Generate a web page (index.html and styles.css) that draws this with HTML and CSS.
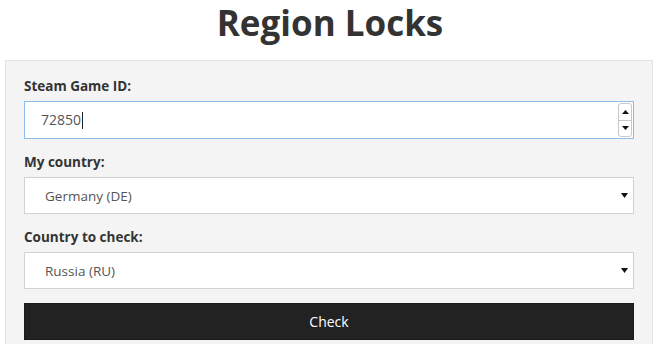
FILE: index.html
```html
<!DOCTYPE html>
<html>
<head>
<meta charset="utf-8">
<title>Region Locks</title>
<link rel="stylesheet" href="styles.css">
</head>
<body>
<h1 class="title">Region Locks</h1>
<form class="panel">
  <div class="group">
    <label class="label">Steam Game ID:</label>
    <div class="field field-focus">
      <span class="value">72850</span><span class="caret"></span>
      <div class="spinner">
        <div class="spin spin-up"><svg width="7" height="4" viewBox="0 0 7 4"><path d="M0 4 L3.5 0 L7 4 Z" fill="#111"/></svg></div>
        <div class="spin spin-down"><svg width="7" height="4" viewBox="0 0 7 4"><path d="M0 0 L3.5 4 L7 0 Z" fill="#111"/></svg></div>
      </div>
    </div>
  </div>
  <div class="group">
    <label class="label">My country:</label>
    <div class="field select">
      <span class="value">Germany (DE)</span>
      <svg class="arrow" width="7" height="5" viewBox="0 0 7 5"><path d="M0 0 L7 0 L3.5 5 Z" fill="#111"/></svg>
    </div>
  </div>
  <div class="group">
    <label class="label">Country to check:</label>
    <div class="field select">
      <span class="value">Russia (RU)</span>
      <svg class="arrow" width="7" height="5" viewBox="0 0 7 5"><path d="M0 0 L7 0 L3.5 5 Z" fill="#111"/></svg>
    </div>
  </div>
  <button type="button" class="btn">Check</button>
</form>
</body>
</html>
```
FILE: styles.css
```css
html, body {
  margin: 0;
  padding: 0;
  background: #fff;
  font-family: "Open Sans", "Liberation Sans", sans-serif;
  color: #333;
}
.title {
  margin: 0 0 15px;
  font-size: 35px;
  line-height: 45px;
  font-weight: 700;
  text-align: center;
  color: #333;
}
.panel {
  margin: 0 7px 0 5px;
  background: #f4f4f4;
  border: 1px solid #e3e3e3;
  padding: 16px 18px 20px;
  display: flex;
  flex-direction: column;
}
.group {
  display: flex;
  flex-direction: column;
  margin-bottom: 14px;
}
.label {
  font-size: 13.5px;
  line-height: 19px;
  font-weight: 700;
  color: #333;
  margin-bottom: 5px;
}
.field {
  position: relative;
  box-sizing: border-box;
  height: 37px;
  background: #fff;
  border: 1px solid #d2d2d2;
  display: flex;
  align-items: center;
  font-size: 13.5px;
  color: #555;
}
.field-focus {
  height: 38px;
  border-color: #8dbdea;
  padding-left: 16px;
  font-size: 14px;
}
.select {
  padding-left: 20px;
}
.value {
  line-height: 20px;
}
.caret {
  width: 1px;
  height: 17px;
  background: #222;
  margin-left: 1px;
}
.spinner {
  position: absolute;
  right: 1px;
  top: 1px;
  bottom: 1px;
  width: 12px;
  border: 1px solid #c8c8c8;
  border-radius: 3px;
  display: flex;
  flex-direction: column;
  background: #fff;
}
.spin {
  flex: 1;
  display: flex;
  align-items: center;
  justify-content: center;
}
.spin-up {
  border-bottom: 1px solid #c8c8c8;
}
.arrow {
  position: absolute;
  right: 5px;
  top: 15px;
}
.btn {
  height: 37px;
  border: 1px solid #1b1b1b;
  background: #222;
  color: #fff;
  font-family: "Open Sans", "Liberation Sans", sans-serif;
  font-size: 14px;
  padding: 0;
  cursor: pointer;
}
```
